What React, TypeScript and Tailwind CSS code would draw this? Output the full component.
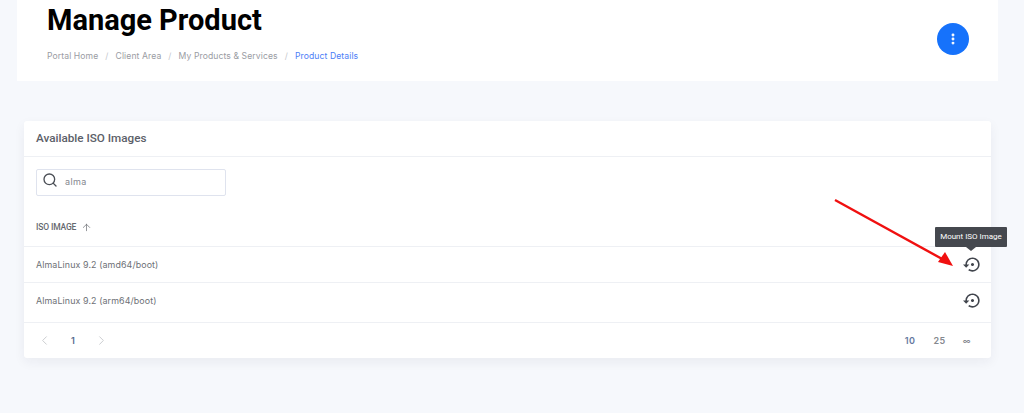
import { ChevronLeft, ChevronRight, ArrowUp, Search, EllipsisVertical } from 'lucide-react';
import { MdSettingsBackupRestore } from 'react-icons/md';

const crumbs = ['Portal Home', 'Client Area', 'My Products & Services'];

const rows = [
    { name: 'AlmaLinux 9.2 (amd64/boot)', height: 'h-[36px]', tip: true },
    { name: 'AlmaLinux 9.2 (arm64/boot)', height: 'h-[40px] pb-[4px]', tip: false },
];

function Breadcrumb() {
    return (
        <nav className="mt-[11px] flex items-center font-['Inter',sans-serif] text-[8.6px] leading-[12px] tracking-[0.1px] text-[#9a9ca3]">
            {crumbs.map((c) => (
                <span key={c} className="flex items-center">
                    {c}
                    <span className="mx-[7px] text-[#c5c7cc]">/</span>
                </span>
            ))}
            <span className="text-[#4d7ef7]">Product Details</span>
        </nav>
    );
}

function MountIcon() {
    return <MdSettingsBackupRestore className="h-[19px] w-[19px] text-[#41454d]" />;
}

export default function App() {
    return (
        <div className="relative flex h-[413px] w-full flex-col overflow-hidden bg-[#f6f8fc] font-['Roboto',sans-serif]">
            <header className="ml-[17px] mr-[26px] flex h-[81px] shrink-0 items-start justify-between bg-white pl-[30px] pr-[29px]">
                <div>
                    <h1 className="mt-[2px] text-[29px] font-bold leading-[37px] text-black">Manage Product</h1>
                    <Breadcrumb />
                </div>
                <button className="mt-[23px] flex h-[32px] w-[32px] items-center justify-center rounded-full bg-[#1672fb] text-white">
                    <EllipsisVertical className="h-[14px] w-[14px]" strokeWidth={3} />
                </button>
            </header>

            <section className="ml-[24px] mr-[33px] mt-[40px] rounded-[3px] bg-white shadow-[0_4px_12px_rgba(30,40,70,0.06)]">
                <div className="flex h-[36px] items-center border-b border-[#eef0f4] pl-[12px]">
                    <h2 className="text-[11.7px] font-medium text-[#5c6068]">Available ISO Images</h2>
                </div>

                <div className="h-[52px] pl-[12px] pt-[12px]">
                    <div className="flex h-[27px] w-[190px] items-center rounded-[2px] border border-[#dfe3ee] pl-[5px]">
                        <Search className="mb-[5px] h-[16px] w-[16px] text-[#4a4e55]" strokeWidth={2} />
                        <span className="mb-[1px] ml-[7px] font-['Inter',sans-serif] text-[9px] tracking-[0.4px] text-[#85888f]">alma</span>
                    </div>
                </div>

                <div className="flex h-[38px] items-center border-b border-[#eef0f4] pl-[12px] text-[8.5px] font-medium tracking-[-0.15px] text-[#66696f]">
                    <span>ISO IMAGE</span>
                    <ArrowUp className="ml-[5px] h-[11px] w-[11px]" strokeWidth={1.5} />
                </div>

                {rows.map((r) => (
                    <div
                        key={r.name}
                        className={`${r.height} relative flex items-center justify-between border-b border-[#eef0f4] pl-[12px] pr-[9px]`}
                    >
                        <span className="font-['Inter',sans-serif] text-[8.9px] tracking-[0.1px] text-[#6d7076]">{r.name}</span>
                        <MountIcon />
                        {r.tip && (
                            <div className="absolute bottom-[35px] right-[-16px] flex h-[20px] w-[72px] items-center justify-center rounded-[1px] bg-[#45484e] text-[8px] text-white">
                                Mount ISO Image
                                <span className="absolute top-[20px] left-[31px] h-0 w-0 border-x-[5px] border-t-[4px] border-x-transparent border-t-[#45484e]" />
                            </div>
                        )}
                    </div>
                ))}

                <div className="flex h-[35px] items-center justify-between pl-[13px] pr-[20px] text-[9px] font-semibold">
                    <div className="flex items-center text-[#c8cacd]">
                        <ChevronLeft className="h-[15px] w-[15px]" strokeWidth={1.5} />
                        <span className="ml-[19px] font-['Inter',sans-serif] text-[#54688c]">1</span>
                        <ChevronRight className="ml-[19px] h-[15px] w-[15px]" strokeWidth={1.5} />
                    </div>
                    <div className="flex items-center font-['Inter',sans-serif] tracking-[0.5px]">
                        <span className="text-[#65789e]">10</span>
                        <span className="ml-[18px] text-[#85888f]">25</span>
                        <span className="ml-[17px] text-[8px] text-[#85888f]">∞</span>
                    </div>
                </div>
            </section>

            <svg className="pointer-events-none absolute left-0 top-0" width="1024" height="413" viewBox="0 0 1024 413">
                <line x1="835" y1="200" x2="944" y2="260" stroke="#f01010" strokeWidth="2.4" />
                <polygon points="953,266 938,262 945,252" fill="#f01010" />
            </svg>
        </div>
    );
}
